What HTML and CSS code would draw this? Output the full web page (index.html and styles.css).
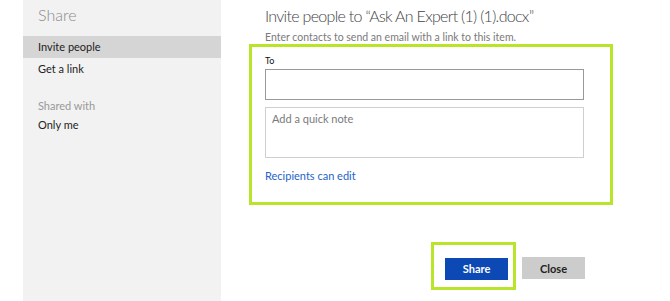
FILE: index.html
```html
<!DOCTYPE html>
<html lang="en">
<head>
  <meta charset="UTF-8">
  <title>Share</title>
  <link rel="stylesheet" href="styles.css">
</head>
<body>
  <div class="page">
    <aside class="sidebar">
      <h2 class="side-title">Share</h2>
      <ul class="side-menu">
        <li class="active">Invite people</li>
        <li>Get a link</li>
      </ul>
      <div class="shared-label">Shared with</div>
      <div class="shared-value">Only me</div>
    </aside>

    <main class="content">
      <h1>Invite people to “Ask An Expert (1) (1).docx”</h1>
      <p class="hint">Enter contacts to send an email with a link to this item.</p>

      <div class="highlight form-box">
        <label class="to-label">To</label>
        <input class="to-input" type="text">
        <textarea class="note" placeholder="Add a quick note"></textarea>
        <a class="perm-link" href="#">Recipients can edit</a>
      </div>

      <div class="actions">
        <div class="highlight share-wrap">
          <button class="btn btn-share">Share</button>
        </div>
        <button class="btn btn-close">Close</button>
      </div>
    </main>
  </div>
</body>
</html>
```

FILE: styles.css
```css
html, body {
  margin: 0;
  height: 100%;
}
body {
  font-family: Lato, "Open Sans", sans-serif;
  background-color: #fff;
  color: #222;
}
.page {
  display: flex;
  height: 301px;
  padding-left: 23px;
}
.sidebar {
  width: 198px;
  background-color: #f2f2f2;
  flex-shrink: 0;
}
.side-title {
  font-size: 16px;
  font-weight: 300;
  color: #8a8a8a;
  margin: 5px 0 0 15px;
  line-height: 20px;
}
.side-menu {
  list-style: none;
  margin: 11px 0 0;
  padding: 0;
}
.side-menu li {
  font-size: 11px;
  line-height: 22px;
  padding-left: 15px;
  color: #222;
}
.side-menu li.active {
  background-color: #d5d5d5;
}
.shared-label {
  font-size: 11px;
  color: #999;
  margin: 18px 0 0 15px;
  line-height: 16px;
}
.shared-value {
  font-size: 11px;
  color: #222;
  margin: 3px 0 0 15px;
  line-height: 16px;
}
.content {
  padding-left: 28px;
  flex: 1;
}
.content h1 {
  font-size: 16px;
  font-weight: 300;
  letter-spacing: -0.7px;
  color: #444;
  margin: 5px 0 0 16px;
  line-height: 22px;
}
.hint {
  font-size: 10.5px;
  color: #7a7a7a;
  margin: 4px 0 0 16px;
  line-height: 13px;
}
.highlight {
  border: 3px solid #b8e52a;
  box-sizing: border-box;
}
.form-box {
  width: 364px;
  height: 161px;
  padding: 8px 0 0 13px;
  display: flex;
  flex-direction: column;
  align-items: flex-start;
}
.to-label {
  font-size: 9px;
  line-height: 12px;
  color: #111;
}
.to-input {
  width: 319px;
  height: 31px;
  box-sizing: border-box;
  border: 1px solid #999;
  margin: 2px 0 0;
  padding: 0;
  outline: none;
}
.note {
  width: 319px;
  height: 51px;
  box-sizing: border-box;
  border: 1px solid #cfcfcf;
  margin: 7px 0 0;
  padding: 4px 6px;
  resize: none;
  font-family: inherit;
  font-size: 11px;
  line-height: 13px;
  outline: none;
}
.note::placeholder {
  color: #7a7a7a;
}
.perm-link {
  font-size: 11px;
  color: #2563c8;
  text-decoration: none;
  margin-top: 11px;
  line-height: 14px;
}
.actions {
  display: flex;
  align-items: flex-start;
  margin: 37px 0 0 182px;
}
.share-wrap {
  width: 85px;
  height: 48px;
  padding: 12px 0 0 11px;
}
.btn {
  width: 63px;
  height: 22px;
  border: none;
  font-family: inherit;
  font-size: 11px;
  font-weight: 700;
  padding: 0;
  cursor: pointer;
}
.btn-share {
  background-color: #0c49b5;
  color: #fff;
}
.btn-close {
  background-color: #cccccc;
  color: #222;
  margin: 15px 0 0 6px;
}
```
